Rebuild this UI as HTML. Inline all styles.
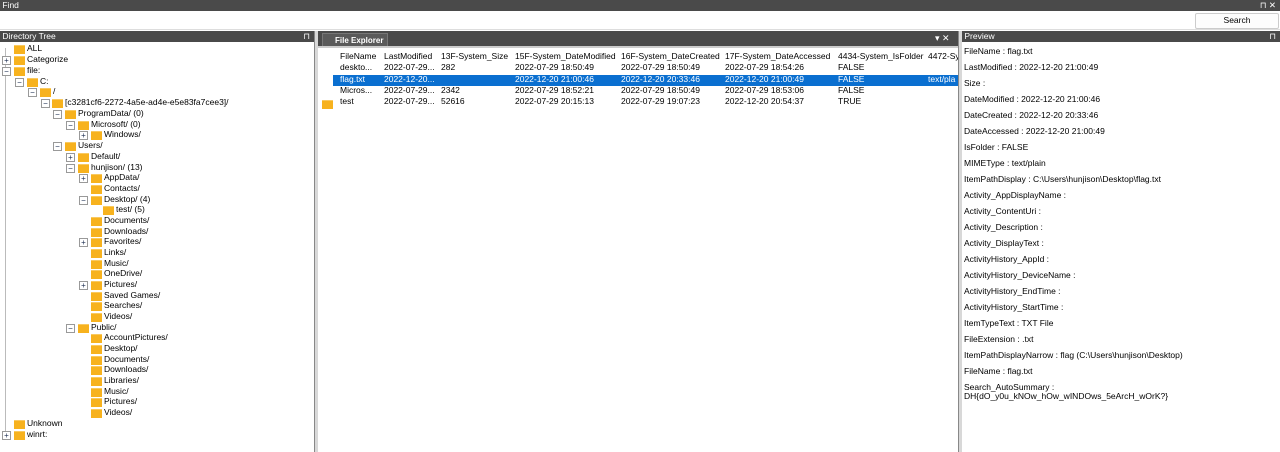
<!DOCTYPE html>
<html><head><style>
body{margin:0;width:1280px;height:452px;overflow:hidden;background:#fff;font-family:"Liberation Sans",sans-serif;font-size:8.5px;color:#000;position:relative}
.a{position:absolute;white-space:nowrap}
.hd{position:absolute;background:#4a4a4a;color:#fff;height:11px;line-height:11px;font-size:8.5px}
.f{position:absolute;width:11px;height:8px;background:#f7b21e;border-top:1px solid #f9c960}
.e{position:absolute;width:7px;height:7px;border:1px solid #999;background:#fff;font-size:8px;line-height:7px;text-align:center;color:#235}
.r{position:absolute;height:11px;line-height:11px;left:0;width:310px}
</style></head><body>
<div class="hd" style="left:0;top:0;width:1280px;height:11px">&nbsp;Find<span style="position:absolute;right:4px">⊓ ✕</span></div>
<div class="a" style="left:1195px;top:13px;width:82px;height:14px;border:1px solid #ccc;border-radius:2px;text-align:center;line-height:13px;background:#fdfdfd">Search</div>
<div style="position:absolute;left:0;top:29px;width:1280px;height:1px;background:#ddd"></div>
<div class="hd" style="left:0;top:31px;width:314px">&nbsp;Directory Tree<span style="position:absolute;right:4px">⊓</span></div>
<div style="position:absolute;left:314px;top:31px;width:3px;height:421px;background:#d8d8d8;border-left:1px solid #888"></div>
<div style="position:absolute;left:958px;top:31px;width:3px;height:421px;background:#d8d8d8;border-left:1px solid #888"></div>
<div style="position:absolute;left:5px;top:48px;width:1px;height:386px;background:#bbb"></div>
<div class="r" style="top:43px"><div class="f" style="left:14px;top:2px"></div><span class="a" style="left:27px">ALL</span></div>
<div class="r" style="top:54px"><div class="e" style="left:2px;top:2px">+</div><div class="f" style="left:14px;top:2px"></div><span class="a" style="left:27px">Categorize</span></div>
<div class="r" style="top:65px"><div class="e" style="left:2px;top:2px">−</div><div class="f" style="left:14px;top:2px"></div><span class="a" style="left:27px">file:</span></div>
<div class="r" style="top:76px"><div class="e" style="left:15px;top:2px">−</div><div class="f" style="left:27px;top:2px"></div><span class="a" style="left:40px">C:</span></div>
<div class="r" style="top:86px"><div class="e" style="left:28px;top:2px">−</div><div class="f" style="left:40px;top:2px"></div><span class="a" style="left:53px">/</span></div>
<div class="r" style="top:97px"><div class="e" style="left:41px;top:2px">−</div><div class="f" style="left:52px;top:2px"></div><span class="a" style="left:65px">[c3281cf6-2272-4a5e-ad4e-e5e83fa7cee3]/</span></div>
<div class="r" style="top:108px"><div class="e" style="left:53px;top:2px">−</div><div class="f" style="left:65px;top:2px"></div><span class="a" style="left:78px">ProgramData/ (0)</span></div>
<div class="r" style="top:119px"><div class="e" style="left:66px;top:2px">−</div><div class="f" style="left:78px;top:2px"></div><span class="a" style="left:91px">Microsoft/ (0)</span></div>
<div class="r" style="top:129px"><div class="e" style="left:79px;top:2px">+</div><div class="f" style="left:91px;top:2px"></div><span class="a" style="left:104px">Windows/</span></div>
<div class="r" style="top:140px"><div class="e" style="left:53px;top:2px">−</div><div class="f" style="left:65px;top:2px"></div><span class="a" style="left:78px">Users/</span></div>
<div class="r" style="top:151px"><div class="e" style="left:66px;top:2px">+</div><div class="f" style="left:78px;top:2px"></div><span class="a" style="left:91px">Default/</span></div>
<div class="r" style="top:162px"><div class="e" style="left:66px;top:2px">−</div><div class="f" style="left:78px;top:2px"></div><span class="a" style="left:91px">hunjison/ (13)</span></div>
<div class="r" style="top:172px"><div class="e" style="left:79px;top:2px">+</div><div class="f" style="left:91px;top:2px"></div><span class="a" style="left:104px">AppData/</span></div>
<div class="r" style="top:183px"><div class="f" style="left:91px;top:2px"></div><span class="a" style="left:104px">Contacts/</span></div>
<div class="r" style="top:194px"><div class="e" style="left:79px;top:2px">−</div><div class="f" style="left:91px;top:2px"></div><span class="a" style="left:104px">Desktop/ (4)</span></div>
<div class="r" style="top:204px"><div class="f" style="left:103px;top:2px"></div><span class="a" style="left:116px">test/ (5)</span></div>
<div class="r" style="top:215px"><div class="f" style="left:91px;top:2px"></div><span class="a" style="left:104px">Documents/</span></div>
<div class="r" style="top:226px"><div class="f" style="left:91px;top:2px"></div><span class="a" style="left:104px">Downloads/</span></div>
<div class="r" style="top:236px"><div class="e" style="left:79px;top:2px">+</div><div class="f" style="left:91px;top:2px"></div><span class="a" style="left:104px">Favorites/</span></div>
<div class="r" style="top:247px"><div class="f" style="left:91px;top:2px"></div><span class="a" style="left:104px">Links/</span></div>
<div class="r" style="top:258px"><div class="f" style="left:91px;top:2px"></div><span class="a" style="left:104px">Music/</span></div>
<div class="r" style="top:268px"><div class="f" style="left:91px;top:2px"></div><span class="a" style="left:104px">OneDrive/</span></div>
<div class="r" style="top:279px"><div class="e" style="left:79px;top:2px">+</div><div class="f" style="left:91px;top:2px"></div><span class="a" style="left:104px">Pictures/</span></div>
<div class="r" style="top:290px"><div class="f" style="left:91px;top:2px"></div><span class="a" style="left:104px">Saved Games/</span></div>
<div class="r" style="top:300px"><div class="f" style="left:91px;top:2px"></div><span class="a" style="left:104px">Searches/</span></div>
<div class="r" style="top:311px"><div class="f" style="left:91px;top:2px"></div><span class="a" style="left:104px">Videos/</span></div>
<div class="r" style="top:322px"><div class="e" style="left:66px;top:2px">−</div><div class="f" style="left:78px;top:2px"></div><span class="a" style="left:91px">Public/</span></div>
<div class="r" style="top:332px"><div class="f" style="left:91px;top:2px"></div><span class="a" style="left:104px">AccountPictures/</span></div>
<div class="r" style="top:343px"><div class="f" style="left:91px;top:2px"></div><span class="a" style="left:104px">Desktop/</span></div>
<div class="r" style="top:354px"><div class="f" style="left:91px;top:2px"></div><span class="a" style="left:104px">Documents/</span></div>
<div class="r" style="top:364px"><div class="f" style="left:91px;top:2px"></div><span class="a" style="left:104px">Downloads/</span></div>
<div class="r" style="top:375px"><div class="f" style="left:91px;top:2px"></div><span class="a" style="left:104px">Libraries/</span></div>
<div class="r" style="top:386px"><div class="f" style="left:91px;top:2px"></div><span class="a" style="left:104px">Music/</span></div>
<div class="r" style="top:396px"><div class="f" style="left:91px;top:2px"></div><span class="a" style="left:104px">Pictures/</span></div>
<div class="r" style="top:407px"><div class="f" style="left:91px;top:2px"></div><span class="a" style="left:104px">Videos/</span></div>
<div class="r" style="top:418px"><div class="f" style="left:14px;top:2px"></div><span class="a" style="left:27px">Unknown</span></div>
<div class="r" style="top:429px"><div class="e" style="left:2px;top:2px">+</div><div class="f" style="left:14px;top:2px"></div><span class="a" style="left:27px">winrt:</span></div>
<div class="hd" style="left:318px;top:31px;width:640px;height:15px"></div>
<div class="a" style="left:322px;top:33px;width:52px;height:13px;background:#5a5a5a;border:1px solid #777;border-bottom:none;color:#fff;font-weight:bold;font-size:8px;line-height:13px;padding-left:12px">File Explorer</div>
<div class="a" style="left:935px;top:33px;color:#fff;font-size:9px">▾ ✕</div>
<div style="position:absolute;left:318px;top:46px;width:640px;height:2px;background:#ccc"></div>
<div class="a" style="left:333px;top:75px;width:625px;height:11px;background:#0a6fd0"></div>
<div class="f" style="left:322px;top:100px"></div>
<div class="a" style="left:0;top:51px;line-height:11px;width:958px;overflow:hidden">
<div style="position:relative;height:11px"><span class="a" style="left:340px">FileName</span><span class="a" style="left:384px">LastModified</span><span class="a" style="left:441px">13F-System_Size</span><span class="a" style="left:515px">15F-System_DateModified</span><span class="a" style="left:621px">16F-System_DateCreated</span><span class="a" style="left:725px">17F-System_DateAccessed</span><span class="a" style="left:838px">4434-System_IsFolder</span><span class="a" style="left:928px">4472-Sy</span></div>
<div style="position:relative;height:12px"><span class="a" style="left:340px">deskto...</span><span class="a" style="left:384px">2022-07-29...</span><span class="a" style="left:441px">282</span><span class="a" style="left:515px">2022-07-29 18:50:49</span><span class="a" style="left:621px">2022-07-29 18:50:49</span><span class="a" style="left:725px">2022-07-29 18:54:26</span><span class="a" style="left:838px">FALSE</span></div>
<div style="position:relative;height:11px;color:#fff"><span class="a" style="left:340px">flag.txt</span><span class="a" style="left:384px">2022-12-20...</span><span class="a" style="left:515px">2022-12-20 21:00:46</span><span class="a" style="left:621px">2022-12-20 20:33:46</span><span class="a" style="left:725px">2022-12-20 21:00:49</span><span class="a" style="left:838px">FALSE</span><span class="a" style="left:928px">text/pla</span></div>
<div style="position:relative;height:11px"><span class="a" style="left:340px">Micros...</span><span class="a" style="left:384px">2022-07-29...</span><span class="a" style="left:441px">2342</span><span class="a" style="left:515px">2022-07-29 18:52:21</span><span class="a" style="left:621px">2022-07-29 18:50:49</span><span class="a" style="left:725px">2022-07-29 18:53:06</span><span class="a" style="left:838px">FALSE</span></div>
<div style="position:relative;height:11px"><span class="a" style="left:340px">test</span><span class="a" style="left:384px">2022-07-29...</span><span class="a" style="left:441px">52616</span><span class="a" style="left:515px">2022-07-29 20:15:13</span><span class="a" style="left:621px">2022-07-29 19:07:23</span><span class="a" style="left:725px">2022-12-20 20:54:37</span><span class="a" style="left:838px">TRUE</span></div>
</div>
<div class="hd" style="left:962px;top:31px;width:318px">&nbsp;Preview<span style="position:absolute;right:4px">⊓</span></div>
<div class="a" style="left:964px;top:43px;line-height:16px">
FileName : flag.txt<br>LastModified : 2022-12-20 21:00:49<br>Size :<br>DateModified : 2022-12-20 21:00:46<br>DateCreated : 2022-12-20 20:33:46<br>DateAccessed : 2022-12-20 21:00:49<br>IsFolder : FALSE<br>MIMEType : text/plain<br>ItemPathDisplay : C:\Users\hunjison\Desktop\flag.txt<br>Activity_AppDisplayName :<br>Activity_ContentUri :<br>Activity_Description :<br>Activity_DisplayText :<br>ActivityHistory_AppId :<br>ActivityHistory_DeviceName :<br>ActivityHistory_EndTime :<br>ActivityHistory_StartTime :<br>ItemTypeText : TXT File<br>FileExtension : .txt<br>ItemPathDisplayNarrow : flag (C:\Users\hunjison\Desktop)<br>FileName : flag.txt
<div style="line-height:9px;margin-top:4px">Search_AutoSummary :<br>DH{dO_y0u_kNOw_hOw_wINDOws_5eArcH_wOrK?}</div>
</div>
</body></html>
